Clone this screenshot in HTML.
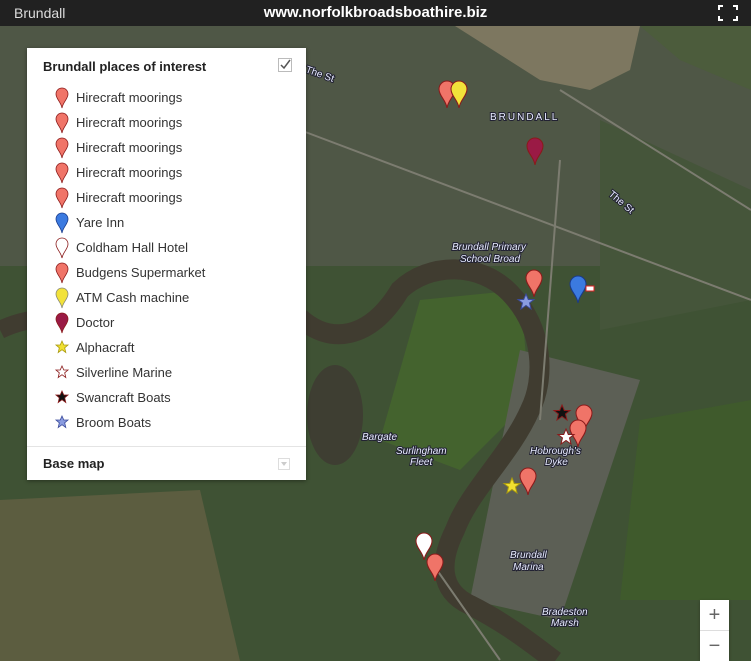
<!DOCTYPE html>
<html><head><meta charset="utf-8"><style>
*{margin:0;padding:0;box-sizing:border-box}
body{width:751px;height:661px;overflow:hidden;font-family:"Liberation Sans",sans-serif;background:#3f5234;position:relative}
#bar{position:absolute;left:0;top:0;width:751px;height:26px;background:#212121;color:#fff}
#bar .l{position:absolute;left:14px;top:5px;font-size:14px;color:#ddd}
#bar .c{position:absolute;left:0;right:0;text-align:center;top:4px;font-size:15px;font-weight:bold}
#leg{position:absolute;left:27px;top:48px;width:279px;height:432px;background:#fff;box-shadow:0 1px 4px rgba(0,0,0,.4)}
#leg .t{position:absolute;left:16px;top:11px;font-size:13px;font-weight:bold;color:#222}
#leg .it{position:absolute;left:49px;font-size:13px;color:#333}
#leg .ic{position:absolute;left:28px}
#zoom{position:absolute;left:700px;top:600px;width:29px;height:61px;background:#fff;box-shadow:0 1px 3px rgba(0,0,0,.3);color:#666;font-size:20px;text-align:center;line-height:30px}
</style></head><body>
<svg width="751" height="661" style="position:absolute;left:0;top:0">
<defs>
<path id="pin" d="M0,0 C-1,-8 -8,-12 -8,-19 A8,8 0 1 1 8,-19 C8,-12 1,-8 0,0Z"/>
<path id="star" d="M0,-8 L2.3,-2.5 8,-2.5 3.5,1 5,7 0,3.5 -5,7 -3.5,1 -8,-2.5 -2.3,-2.5Z"/>
</defs>
<rect width="751" height="661" fill="#3f5234"/>
<rect x="0" y="26" width="751" height="240" fill="#4f5746"/>
<path d="M455,26 L640,26 L630,70 L590,90 L540,80 Z" fill="#7d7760"/>
<path d="M640,26 L751,26 L751,90 L680,60Z" fill="#4c5c3c"/>
<path d="M600,120 L751,190 L751,300 L600,330 Z" fill="#45553a"/>
<path d="M420,300 L520,290 L530,400 L460,470 L380,440 Z" fill="#44632e"/>
<path d="M520,350 L640,380 L560,620 L470,600 Z" fill="#5c5f55"/>
<path d="M640,420 L751,400 L751,600 L620,600 Z" fill="#3f5a2c"/>
<path d="M0,500 L200,490 L240,661 L0,661Z" fill="#5c5d40"/>
<path d="M300,318 C330,345 370,340 400,290 C430,262 480,262 510,293 C545,330 545,380 530,410 C510,455 470,490 455,530 C440,560 438,590 470,605 C510,625 540,650 555,661" fill="none" stroke="#403c30" stroke-width="20"/>
<path d="M0,330 C60,300 150,330 300,318" fill="none" stroke="#403c30" stroke-width="18"/>
<ellipse cx="335" cy="415" rx="28" ry="50" fill="#3e3e32"/>
<path d="M300,130 L751,300 M560,160 L540,420 M430,560 L500,660 M560,90 L751,210" stroke="#7c7c70" stroke-width="2" fill="none"/>
<g fill="#e8ecff" stroke="#223" stroke-width="2" paint-order="stroke" font-family="Liberation Sans" font-size="10" font-style="italic">
<text x="362" y="440">Bargate</text><text x="396" y="454">Surlingham</text><text x="410" y="465">Fleet</text>
<text x="530" y="454">Hobrough's</text><text x="545" y="465">Dyke</text><text x="510" y="558">Brundall</text><text x="513" y="570">Marina</text>
<text x="542" y="615">Bradeston</text><text x="551" y="626">Marsh</text>
<text x="452" y="250">Brundall Primary</text><text x="460" y="262">School Broad</text>
<text x="490" y="120" font-style="normal" letter-spacing="2">BRUNDALL</text>
<text x="608" y="195" font-style="normal" transform="rotate(40 608 195)">The St</text>
<text x="305" y="72" font-style="normal" transform="rotate(20 305 72)">The St</text>
</g>
<g stroke="#8a1a1a" stroke-width="1">
<use href="#pin" x="447" y="108" fill="#f07468"/>
<use href="#pin" x="459" y="108" fill="#f2e23a"/>
<use href="#pin" x="535" y="165" fill="#9a1a45"/>
<use href="#pin" x="534" y="297" fill="#f07468"/>
<use href="#pin" x="578" y="303" fill="#3b7ae0" stroke="#1a3a8a"/>
<use href="#pin" x="584" y="432" fill="#f07468"/>
<use href="#pin" x="578" y="447" fill="#f07468"/>
<use href="#pin" x="528" y="495" fill="#f07468"/>
<use href="#pin" x="424" y="560" fill="#fff"/>
<use href="#pin" x="435" y="581" fill="#f07468"/>
<use href="#star" x="526" y="302" fill="#8a9ce0" stroke="#3a4a9a"/>
<use href="#star" x="562" y="413" fill="#111" stroke="#8a1a1a"/>
<use href="#star" x="566" y="437" fill="#fff"/>
<use href="#star" x="512" y="486" fill="#f0e030" stroke="#aa9a10"/>
</g>
<rect x="586" y="286" width="8" height="5" fill="#fff" stroke="#d22" stroke-width="1"/>
</svg>
<div id="bar"><span class="l">Brundall</span><div class="c">www.norfolkbroadsboathire.biz</div>
<svg width="20" height="16" style="position:absolute;left:718px;top:5px" stroke="#fff" stroke-width="2" fill="none"><path d="M1,5V1H5M15,1H19V5M19,11V15H15M5,15H1V11"/></svg></div>
<div id="leg">
<div class="t">Brundall places of interest</div>
<svg width="14" height="14" style="position:absolute;left:251px;top:10px"><rect x="0.5" y="0.5" width="13" height="13" fill="#fff" stroke="#bbb"/><path d="M3,7 L6,10 L12,2" stroke="#555" stroke-width="1.5" fill="none"/></svg>
<svg width="30" height="380" class="ic" style="top:38px;left:25px">
<defs><path id="p2" d="M0,0 C-1,-6 -6,-9 -6,-14 A6,6 0 1 1 6,-14 C6,-9 1,-6 0,0Z"/><path id="s2" d="M0,-6 L1.8,-2 6,-2 2.7,0.8 3.8,5.5 0,2.7 -3.8,5.5 -2.7,0.8 -6,-2 -1.8,-2Z"/></defs>
<g stroke="#8a1a1a" stroke-width="0.8">
<use href="#p2" x="10" y="22" fill="#f07468"/><use href="#p2" x="10" y="47" fill="#f07468"/><use href="#p2" x="10" y="72" fill="#f07468"/><use href="#p2" x="10" y="97" fill="#f07468"/><use href="#p2" x="10" y="122" fill="#f07468"/>
<use href="#p2" x="10" y="147" fill="#3b7ae0" stroke="#1a3a8a"/><use href="#p2" x="10" y="172" fill="#fff"/><use href="#p2" x="10" y="197" fill="#f07468"/><use href="#p2" x="10" y="222" fill="#f2e23a" stroke="#887"/><use href="#p2" x="10" y="247" fill="#9a1a45"/>
<use href="#s2" x="10" y="261" fill="#f0e030" stroke="#aa9a10"/><use href="#s2" x="10" y="286" fill="#fff"/><use href="#s2" x="10" y="311" fill="#111"/><use href="#s2" x="10" y="336" fill="#8a9ce0" stroke="#3a4a9a"/>
</g></svg>
<div class="it" style="top:42px">Hirecraft moorings</div>
<div class="it" style="top:67px">Hirecraft moorings</div>
<div class="it" style="top:92px">Hirecraft moorings</div>
<div class="it" style="top:117px">Hirecraft moorings</div>
<div class="it" style="top:142px">Hirecraft moorings</div>
<div class="it" style="top:167px">Yare Inn</div>
<div class="it" style="top:192px">Coldham Hall Hotel</div>
<div class="it" style="top:217px">Budgens Supermarket</div>
<div class="it" style="top:242px">ATM Cash machine</div>
<div class="it" style="top:267px">Doctor</div>
<div class="it" style="top:292px">Alphacraft</div>
<div class="it" style="top:317px">Silverline Marine</div>
<div class="it" style="top:342px">Swancraft Boats</div>
<div class="it" style="top:367px">Broom Boats</div>
<div style="position:absolute;left:0;right:0;top:398px;border-top:1px solid #e4e4e4"></div>
<div class="t" style="top:408px">Base map</div>
<svg width="12" height="12" style="position:absolute;left:251px;top:410px"><rect x="0.5" y="0.5" width="11" height="11" fill="#fff" stroke="#ddd"/><path d="M3,4 L6,8 L9,4Z" fill="#ccc"/></svg>
</div>
<div id="zoom"><div>+</div><div style="border-top:1px solid #ddd">−</div></div>
</body></html>
